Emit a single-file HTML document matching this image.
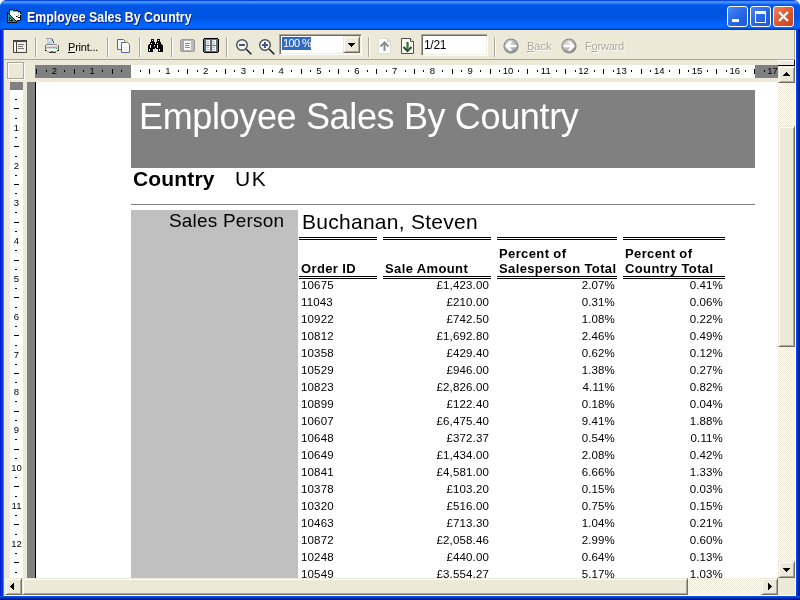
<!DOCTYPE html>
<html><head><meta charset="utf-8">
<style>
*{margin:0;padding:0;box-sizing:border-box}
html,body{width:800px;height:600px;overflow:hidden;background:#fff;font-family:"Liberation Sans",sans-serif}
.a{position:absolute}
#title{left:0;top:0;width:800px;height:30px;border-radius:6px 6px 0 0;
 background:linear-gradient(to bottom,#0a45dc 0px,#0a45dc 1px,#3d90ff 1px,#3d90ff 3px,#2a7af8 3px,#2a7af8 4px,#0f62ee 4px,#0f62ee 5px,#0058e8 5px,#0054e2 10px,#0054e2 18px,#005cf0 21px,#0066ff 25px,#0066ff 28px,#0050e0 28px,#0050e0 29px,#0038c8 29px)}
#ttext{left:27px;top:9px;color:#fff;font-weight:bold;font-size:14px;line-height:17px;text-shadow:1px 1px 0 #0a1e80;transform:scaleX(0.885);transform-origin:0 0;white-space:nowrap}
#frameL{left:0;top:30px;width:4px;height:570px;background:linear-gradient(to right,#0020d0 0,#0020d0 1px,#0830d8 1px,#0838e0 3px,#3a84f6 3px)}
#frameR{left:796px;top:30px;width:4px;height:570px;background:linear-gradient(to right,#0048e8 0,#0048e8 1px,#0036c4 1px,#0030b8 2px,#00209c 3px,#001080 4px)}
#frameB{left:0;top:596px;width:800px;height:4px;background:linear-gradient(to bottom,#0a52e6 0,#0a52e6 1px,#0040d0 1px,#0030b8 2px,#00209c 3px,#001080 4px)}
#client{left:4px;top:30px;width:792px;height:566px;background:#ece9d8}
#tbline{left:4px;top:59px;width:792px;height:1px;background:#aca899}
.sep{top:37px;width:2px;height:20px;border-left:1px solid #aca899;border-right:1px solid #fff}
.tbtext{font-size:11px;line-height:13px;color:#000;white-space:nowrap}
.dis{color:#aca899;text-shadow:1px 1px 0 #fff}
#corner{left:7px;top:62px;width:17px;height:17px;border:1px solid #aca899;box-shadow:inset 1px 1px 0 #fff,1px 1px 0 #fff}
#hrul{left:35px;top:65px;width:743px;height:13px;background:#fff;overflow:hidden}
.hgray{top:0;height:13px;background:#808080}
.hn{position:absolute;top:-1px;width:20px;text-align:center;font-size:9.5px;line-height:13px;color:#000}
.ht{position:absolute;top:4px;width:1px;height:5px;background:#000}
.hd{position:absolute;top:5px;width:1px;height:2px;background:#000}
#vrul{left:10px;top:82px;width:13px;height:496px;background:#fff;overflow:hidden}
.vn{position:absolute;left:0;width:13px;text-align:center;font-size:9.5px;line-height:12px;color:#000}
.vt{position:absolute;left:4px;width:5px;height:1px;background:#000}
.vd{position:absolute;left:5px;width:2px;height:1px;background:#000}
#gstrip{left:27px;top:82px;width:8px;height:496px;background:#808080}
#bline{left:35px;top:82px;width:1px;height:496px;background:#000}
#page{left:36px;top:82px;width:742px;height:496px;background:#fff}
.track{background-color:#fff;background-image:linear-gradient(45deg,#ece9d8 25%,transparent 25%,transparent 75%,#ece9d8 75%),linear-gradient(45deg,#ece9d8 25%,transparent 25%,transparent 75%,#ece9d8 75%);background-size:2px 2px;background-position:0 0,1px 1px}
.b3d{background:#ece9d8;border-top:1px solid #ece9d8;border-left:1px solid #ece9d8;border-right:1px solid #716f64;border-bottom:1px solid #716f64;box-shadow:inset 1px 1px 0 #fff,inset -1px -1px 0 #aca899}
.td{position:absolute;font-size:11.5px;line-height:13px;color:#000;white-space:nowrap;letter-spacing:0.15px}
.r{text-align:right}
.dl{position:absolute;height:3px;border-top:1px solid #000;border-bottom:1px solid #000}
.th{position:absolute;font-weight:bold;font-size:13px;line-height:15px;color:#000;white-space:nowrap;letter-spacing:0.38px}
.tbb{position:absolute;width:21px;height:21px;border:1px solid #fff;border-radius:3px}
#wrap{position:absolute;left:0;top:0;width:800px;height:600px;will-change:transform}
</style></head><body><div id="wrap">
<div class="a" id="title"></div>
<svg class="a" style="left:6px;top:8px" width="16" height="16" viewBox="0 0 16 16" shape-rendering="crispEdges">
 <path d="M3 1 H7 V2 H12 V3 H15 V4 H15 V12 H14 V13 H7 V12 H4 V4 H3 Z" fill="#000"/>
 <path d="M4 3 H7 V4 H12 V5 H14 V12 H7 V11 H4 Z" fill="#fff"/>
 <rect x="4" y="2" width="3" height="1" fill="#10e8e8"/>
 <rect x="7" y="3" width="5" height="1" fill="#10e8e8"/>
 <rect x="12" y="4" width="2" height="1" fill="#10e8e8"/>
 <rect x="12" y="7" width="1" height="1" fill="#e04818"/>
 <rect x="11" y="8" width="1" height="1" fill="#e04818"/>
 <rect x="10" y="8" width="1" height="1" fill="#000"/>
 <rect x="12" y="9" width="2" height="1" fill="#000"/>
 <rect x="14" y="6" width="1" height="1" fill="#c8c8c8"/>
 <path d="M1 4 H2 V5 H3 V6 H4 V7 H5 V8 H6 V9 H7 V10 H8 V11 H9 V12 H10 V13 H11 V15 H1 Z" fill="#000"/>
 <path d="M2 6 H3 V7 H4 V8 H5 V9 H6 V10 H7 V11 H8 V12 H9 V13 H10 V14 H2 Z" fill="#1c9c94"/>
 <path d="M3 9 H4 V10 H5 V11 H6 V12 H7 V13 H3 Z" fill="#000"/>
 <rect x="4" y="11" width="1" height="1" fill="#fff"/>
 <rect x="10" y="12" width="1" height="1" fill="#d0d0d0"/>
</svg>
<div class="a" id="ttext">Employee Sales By Country</div>
<div class="tbb" style="left:727px;top:6px;background:linear-gradient(135deg,#4a88f8 0%,#2a68e8 50%,#1c58d8 100%)"></div>
<div class="a" style="left:732px;top:19px;width:7px;height:3px;background:#fff"></div>
<div class="tbb" style="left:750px;top:6px;background:linear-gradient(135deg,#4a88f8 0%,#2a68e8 50%,#1c58d8 100%)"></div>
<div class="a" style="left:755px;top:11px;width:11px;height:12px;border:1px solid #fff;border-top-width:3px"></div>
<div class="tbb" style="left:773px;top:6px;background:linear-gradient(135deg,#f08060 0%,#e05830 50%,#c84020 100%)"></div>
<svg class="a" style="left:773px;top:6px" width="21" height="21" viewBox="0 0 21 21"><path d="M6 6 L15 15 M15 6 L6 15" stroke="#fff" stroke-width="2.2"/></svg>

<div class="a" id="frameL"></div>
<div class="a" id="frameR"></div>
<div class="a" id="frameB"></div>
<div class="a" id="client"></div>
<div class="a" id="tbline"></div>
<div class="a" style="left:4px;top:30px;width:1px;height:29px;background:#f8f6ee"></div>
<div class="a" style="left:794px;top:30px;width:1px;height:30px;background:#aca899"></div>
<div class="a" style="left:795px;top:30px;width:1px;height:30px;background:#fff"></div>

<!-- toolbar -->
<svg class="a" style="left:13px;top:40px" width="14" height="13" viewBox="0 0 14 13" shape-rendering="crispEdges">
 <rect x="0" y="0" width="14" height="13" fill="#46443c"/>
 <rect x="1" y="2" width="2" height="10" fill="#fff"/>
 <rect x="3" y="2" width="1" height="10" fill="#46443c"/>
 <rect x="4" y="2" width="9" height="10" fill="#f0efea"/>
 <rect x="5" y="4" width="6" height="1" fill="#7c7a70"/>
 <rect x="5" y="6" width="5" height="1" fill="#7c7a70"/>
 <rect x="5" y="8" width="6" height="1" fill="#7c7a70"/>
</svg>
<div class="a sep" style="left:35px"></div>
<svg class="a" style="left:45px;top:38px" width="14" height="16" viewBox="0 0 14 16" shape-rendering="crispEdges">
 <rect x="1" y="0" width="6" height="1" fill="#9c9c9c"/>
 <rect x="2" y="1" width="5" height="5" fill="#b4d0f8"/>
 <rect x="3" y="1" width="3" height="2" fill="#d8e8fc"/>
 <rect x="7" y="1" width="1" height="2" fill="#303c78"/>
 <rect x="8" y="3" width="1" height="2" fill="#303c78"/>
 <path d="M1 6 H12 V7 H13 V12 H0 V7 H1 Z" fill="#d4d4d4"/>
 <rect x="1" y="6" width="11" height="1" fill="#888"/>
 <rect x="1" y="7" width="11" height="1" fill="#f2f2f2"/>
 <rect x="2" y="9" width="10" height="1" fill="#a8a8a8"/>
 <rect x="0" y="7" width="1" height="5" fill="#707070"/>
 <rect x="13" y="7" width="1" height="5" fill="#606060"/>
 <rect x="11" y="10" width="1" height="1" fill="#30c030"/>
 <rect x="1" y="11" width="12" height="2" fill="#f8f8f8"/>
 <rect x="0" y="12" width="2" height="1" fill="#303030"/>
 <rect x="12" y="12" width="2" height="1" fill="#303030"/>
 <rect x="2" y="13" width="10" height="1" fill="#b8b8b8"/>
 <rect x="6" y="13" width="2" height="1" fill="#4070c8"/>
 <rect x="4" y="14" width="7" height="1" fill="#3a3a3a"/>
</svg>
<div class="a tbtext" style="left:68px;top:41px;letter-spacing:-0.2px"><u>P</u>rint...</div>
<div class="a sep" style="left:107px"></div>
<svg class="a" style="left:117px;top:39px" width="14" height="15" viewBox="0 0 14 15">
 <path d="M0.5 0.5 H6.5 L8.5 2.5 V10.5 H0.5 Z" fill="#f4f7fc" stroke="#56689a"/>
 <path d="M4.5 3.5 H10.5 L12.5 5.5 V13.5 H4.5 Z" fill="#f8fafd" stroke="#56689a"/>
 <rect x="6" y="8" width="5" height="1" fill="#e4eaf4"/>
 <rect x="6" y="10" width="4" height="1" fill="#e4eaf4"/>
 <circle cx="9.5" cy="2.5" r="0.9" fill="#e8e020"/>
</svg>
<div class="a sep" style="left:139px"></div>
<svg class="a" style="left:145px;top:37px" width="20" height="16" viewBox="0 0 20 16" shape-rendering="crispEdges" fill="#000">
 <rect x="6" y="2" width="3" height="1"/>
 <rect x="12" y="2" width="3" height="1"/>
 <rect x="6" y="3" width="3" height="1"/>
 <rect x="12" y="3" width="3" height="1"/>
 <rect x="6" y="4" width="3" height="1"/>
 <rect x="12" y="4" width="3" height="1"/>
 <rect x="5" y="5" width="5" height="1"/>
 <rect x="11" y="5" width="5" height="1"/>
 <rect x="5" y="6" width="5" height="1"/>
 <rect x="11" y="6" width="5" height="1"/>
 <rect x="4" y="7" width="13" height="1"/>
 <rect x="3" y="8" width="15" height="1"/>
 <rect x="3" y="9" width="15" height="1"/>
 <rect x="3" y="10" width="15" height="1"/>
 <rect x="3" y="11" width="7" height="1"/>
 <rect x="11" y="11" width="7" height="1"/>
 <rect x="3" y="12" width="5" height="1"/>
 <rect x="13" y="12" width="5" height="1"/>
 <rect x="3" y="13" width="5" height="1"/>
 <rect x="13" y="13" width="5" height="1"/>
 <rect x="3" y="14" width="5" height="1"/>
 <rect x="13" y="14" width="5" height="1"/>
 <rect x="7" y="3" width="1" height="1" fill="#fff"/>
 <rect x="13" y="3" width="1" height="1" fill="#fff"/>
 <rect x="6" y="6" width="1" height="1" fill="#fff"/>
 <rect x="12" y="6" width="1" height="1" fill="#fff"/>
 <rect x="5" y="8" width="1" height="1" fill="#fff"/>
 <rect x="5" y="9" width="1" height="1" fill="#fff"/>
 <rect x="5" y="10" width="1" height="1" fill="#e8e8e8"/>
 <rect x="12" y="8" width="1" height="1" fill="#fff"/>
 <rect x="12" y="9" width="1" height="1" fill="#fff"/>
 <rect x="12" y="10" width="1" height="1" fill="#e8e8e8"/>
 <rect x="9" y="8" width="1" height="1" fill="#a0a0a0"/>
 <rect x="9" y="9" width="1" height="1" fill="#a0a0a0"/>
 <rect x="4" y="12" width="1" height="1" fill="#fff"/>
 <rect x="4" y="13" width="1" height="1" fill="#e0e0e0"/>
 <rect x="14" y="12" width="1" height="1" fill="#fff"/>
 <rect x="14" y="13" width="1" height="1" fill="#e0e0e0"/>
</svg>
<div class="a sep" style="left:171px"></div>
<svg class="a" style="left:180px;top:39px" width="15" height="13" viewBox="0 0 15 13" shape-rendering="crispEdges">
 <path d="M1 0 H14 V1 H15 V12 H14 V13 H1 V12 H0 V1 H1 Z" fill="#9c9c9c"/>
 <rect x="1" y="1" width="13" height="11" fill="#b4b4b4"/>
 <rect x="2" y="1" width="2" height="11" fill="#a8a8a8"/>
 <rect x="11" y="1" width="2" height="11" fill="#bcbcbc"/>
 <rect x="4" y="2" width="7" height="9" fill="#fafafa"/>
 <rect x="5" y="4" width="5" height="1" fill="#8a8a8a"/>
 <rect x="5" y="6" width="4" height="1" fill="#8a8a8a"/>
 <rect x="5" y="8" width="5" height="1" fill="#8a8a8a"/>
</svg>
<svg class="a" style="left:203px;top:38px" width="16" height="15" viewBox="0 0 16 15" shape-rendering="crispEdges">
 <path d="M1 0 H15 V1 H16 V14 H15 V15 H1 V14 H0 V1 H1 Z" fill="#000"/>
 <rect x="1" y="1" width="14" height="13" fill="#6c6c6c"/>
 <rect x="3" y="2" width="4" height="5" fill="#fff"/>
 <rect x="9" y="2" width="4" height="5" fill="#fff"/>
 <rect x="3" y="8" width="4" height="5" fill="#fff"/>
 <rect x="9" y="8" width="4" height="5" fill="#fff"/>
 <rect x="3" y="2" width="1" height="5" fill="#c8e4f8"/>
 <rect x="9" y="2" width="1" height="5" fill="#c8e4f8"/>
 <rect x="3" y="8" width="1" height="5" fill="#c8e4f8"/>
 <rect x="9" y="8" width="1" height="5" fill="#c8e4f8"/>
 <rect x="4" y="3" width="2" height="1" fill="#b0b0b0"/>
 <rect x="4" y="5" width="2" height="1" fill="#b0b0b0"/>
 <rect x="10" y="3" width="2" height="1" fill="#b0b0b0"/>
 <rect x="10" y="5" width="2" height="1" fill="#b0b0b0"/>
 <rect x="4" y="9" width="2" height="1" fill="#b0b0b0"/>
 <rect x="4" y="11" width="2" height="1" fill="#b0b0b0"/>
 <rect x="10" y="9" width="2" height="1" fill="#b0b0b0"/>
 <rect x="10" y="11" width="2" height="1" fill="#b0b0b0"/>
</svg>
<div class="a sep" style="left:226px"></div>
<svg class="a" style="left:236px;top:39px" width="17" height="17" viewBox="0 0 17 17">
 <path d="M10.5 10.5 L15.5 15.5" stroke="#c8ccd4" stroke-width="2.2"/>
 <path d="M10 10 L15.3 15.3" stroke="#1a1a1a" stroke-width="1.3"/>
 <circle cx="6" cy="6" r="5.3" fill="#f2f5fa" stroke="#4c4c4c" stroke-width="1.4"/>
 <rect x="3" y="5" width="6" height="2" fill="#46568c"/>
 
</svg>
<svg class="a" style="left:259px;top:39px" width="17" height="17" viewBox="0 0 17 17">
 <path d="M10.5 10.5 L15.5 15.5" stroke="#c8ccd4" stroke-width="2.2"/>
 <path d="M10 10 L15.3 15.3" stroke="#1a1a1a" stroke-width="1.3"/>
 <circle cx="6" cy="6" r="5.3" fill="#f2f5fa" stroke="#4c4c4c" stroke-width="1.4"/>
 <rect x="3" y="5" width="6" height="2" fill="#46568c"/>
 <rect x="5" y="3" width="2" height="6" fill="#46568c"/>
</svg>
<!-- combo -->
<div class="a" style="left:279px;top:34px;width:83px;height:21px;background:#fff;border-top:1px solid #aca899;border-left:1px solid #aca899;border-right:1px solid #fff;border-bottom:1px solid #fff;box-shadow:inset 1px 1px 0 #716f64,inset -1px -1px 0 #f1efe2"></div>
<div class="a" style="left:282px;top:37px;width:29px;height:13px;background:#316ac5"></div>
<div class="a tbtext" style="left:283px;top:37px;color:#fff;letter-spacing:-0.6px">100 %</div>
<div class="a b3d" style="left:343px;top:36px;width:17px;height:17px"></div>
<svg class="a" style="left:348px;top:43px" width="7" height="4" viewBox="0 0 7 4" shape-rendering="crispEdges"><path d="M0 0 H7 V1 H6 V2 H5 V3 H4 V4 H3 V3 H2 V2 H1 V1 H0 Z" fill="#000"/></svg>
<div class="a sep" style="left:368px"></div>
<svg class="a" style="left:378px;top:38px" width="13" height="16" viewBox="0 0 13 16">
 <path d="M0.5 0.5 L9.5 0.5 L12.5 3.5 L12.5 15.5 L0.5 15.5 Z" fill="#fdfdfb" stroke="#dcdcd8"/>
 <path d="M9.5 0.5 L9.5 3.5 L12.5 3.5" fill="#e8e8e4" stroke="#c8c8c4"/>
 <path d="M6.5 4.5 L6.5 13" stroke="#8c8c8c" stroke-width="2"/>
 <path d="M2.5 8.5 L6.5 4.5 L10.5 8.5" stroke="#8c8c8c" stroke-width="2" fill="none"/>
</svg>
<svg class="a" style="left:401px;top:38px" width="13" height="16" viewBox="0 0 13 16">
 <path d="M0.5 0.5 L9.5 0.5 L12.5 3.5 L12.5 15.5 L0.5 15.5 Z" fill="#fbfbf6" stroke="#505048"/>
 <path d="M9.5 0.5 L9.5 3.5 L12.5 3.5" fill="#fff" stroke="#505048"/>
 <path d="M6.5 4 L6.5 13" stroke="#2a4a2a" stroke-width="2"/>
 <path d="M2.5 9 L6.5 13 L10.5 9" stroke="#2a4a2a" stroke-width="2" fill="none"/>
 <path d="M7 5 L7 12" stroke="#40b040" stroke-width="1"/>
</svg>
<div class="a" style="left:421px;top:34px;width:67px;height:22px;background:#fff;border-top:1px solid #aca899;border-left:1px solid #aca899;border-right:1px solid #fff;border-bottom:1px solid #fff;box-shadow:inset 1px 1px 0 #716f64,inset -1px -1px 0 #f1efe2"></div>
<div class="a tbtext" style="left:424px;top:39px;font-size:12px;letter-spacing:-0.3px">1/21</div>
<div class="a sep" style="left:494px"></div>
<svg class="a" style="left:503px;top:38px" width="16" height="16" viewBox="0 0 16 16">
 <defs><radialGradient id="gb" cx="0.4" cy="0.35" r="0.7"><stop offset="0" stop-color="#e4e4e4"/><stop offset="0.6" stop-color="#b4b4b4"/><stop offset="1" stop-color="#8c8c8c"/></radialGradient></defs>
 <circle cx="8" cy="8" r="7.6" fill="#8a8a8a"/>
 <circle cx="8" cy="8" r="6.6" fill="url(#gb)"/>
 <path d="M3.5 8 L7.5 4 M3.5 8 L7.5 12 M3.8 8 L12.5 8" stroke="#fff" stroke-width="2.4" stroke-linecap="round"/>
</svg>
<div class="a tbtext dis" style="left:527px;top:40px"><u>B</u>ack</div>
<svg class="a" style="left:561px;top:38px" width="16" height="16" viewBox="0 0 16 16">
 <circle cx="8" cy="8" r="7.6" fill="#8a8a8a"/>
 <circle cx="8" cy="8" r="6.6" fill="url(#gb)"/>
 <path d="M12.5 8 L8.5 4 M12.5 8 L8.5 12 M12.2 8 L3.5 8" stroke="#fff" stroke-width="2.4" stroke-linecap="round"/>
</svg>
<div class="a tbtext dis" style="left:585px;top:40px;letter-spacing:-0.2px">F<u>o</u>rward</div>

<div class="a" id="corner"></div>
<div class="a" id="hrul">
<div class="a hgray" style="left:0;width:96px"></div>
<div class="a hgray" style="left:720px;width:23px"></div>
<div class="ht" style="left:1.0px"></div>
<div class="hd" style="left:10.5px"></div>
<div class="hn" style="left:9.4px">2</div>
<div class="hd" style="left:29.4px"></div>
<div class="ht" style="left:38.8px"></div>
<div class="hd" style="left:48.2px"></div>
<div class="hn" style="left:47.2px">1</div>
<div class="hd" style="left:67.2px"></div>
<div class="ht" style="left:76.6px"></div>
<div class="hd" style="left:86.0px"></div>
<div class="hd" style="left:104.9px"></div>
<div class="ht" style="left:114.4px"></div>
<div class="hd" style="left:123.8px"></div>
<div class="hn" style="left:122.8px">1</div>
<div class="hd" style="left:142.8px"></div>
<div class="ht" style="left:152.2px"></div>
<div class="hd" style="left:161.6px"></div>
<div class="hn" style="left:160.6px">2</div>
<div class="hd" style="left:180.6px"></div>
<div class="ht" style="left:190.0px"></div>
<div class="hd" style="left:199.4px"></div>
<div class="hn" style="left:198.4px">3</div>
<div class="hd" style="left:218.3px"></div>
<div class="ht" style="left:227.8px"></div>
<div class="hd" style="left:237.2px"></div>
<div class="hn" style="left:236.2px">4</div>
<div class="hd" style="left:256.1px"></div>
<div class="ht" style="left:265.6px"></div>
<div class="hd" style="left:275.0px"></div>
<div class="hn" style="left:274.0px">5</div>
<div class="hd" style="left:293.9px"></div>
<div class="ht" style="left:303.4px"></div>
<div class="hd" style="left:312.9px"></div>
<div class="hn" style="left:311.8px">6</div>
<div class="hd" style="left:331.8px"></div>
<div class="ht" style="left:341.2px"></div>
<div class="hd" style="left:350.6px"></div>
<div class="hn" style="left:349.6px">7</div>
<div class="hd" style="left:369.5px"></div>
<div class="ht" style="left:379.0px"></div>
<div class="hd" style="left:388.4px"></div>
<div class="hn" style="left:387.4px">8</div>
<div class="hd" style="left:407.3px"></div>
<div class="ht" style="left:416.8px"></div>
<div class="hd" style="left:426.2px"></div>
<div class="hn" style="left:425.2px">9</div>
<div class="hd" style="left:445.1px"></div>
<div class="ht" style="left:454.6px"></div>
<div class="hd" style="left:464.0px"></div>
<div class="hn" style="left:463.0px">10</div>
<div class="hd" style="left:483.0px"></div>
<div class="ht" style="left:492.4px"></div>
<div class="hd" style="left:501.8px"></div>
<div class="hn" style="left:500.8px">11</div>
<div class="hd" style="left:520.8px"></div>
<div class="ht" style="left:530.2px"></div>
<div class="hd" style="left:539.6px"></div>
<div class="hn" style="left:538.6px">12</div>
<div class="hd" style="left:558.5px"></div>
<div class="ht" style="left:568.0px"></div>
<div class="hd" style="left:577.5px"></div>
<div class="hn" style="left:576.4px">13</div>
<div class="hd" style="left:596.3px"></div>
<div class="ht" style="left:605.8px"></div>
<div class="hd" style="left:615.2px"></div>
<div class="hn" style="left:614.2px">14</div>
<div class="hd" style="left:634.1px"></div>
<div class="ht" style="left:643.6px"></div>
<div class="hd" style="left:653.0px"></div>
<div class="hn" style="left:652.0px">15</div>
<div class="hd" style="left:671.9px"></div>
<div class="ht" style="left:681.4px"></div>
<div class="hd" style="left:690.8px"></div>
<div class="hn" style="left:689.8px">16</div>
<div class="hd" style="left:709.8px"></div>
<div class="ht" style="left:719.2px"></div>
<div class="hd" style="left:728.6px"></div>
<div class="hn" style="left:727.6px">17</div>
</div>
<div class="a" id="vrul">
<div class="a" style="left:0;top:0;width:13px;height:8px;background:#808080"></div>
<div class="vd" style="top:17.0px"></div>
<div class="vt" style="top:26.4px"></div>
<div class="vd" style="top:35.8px"></div>
<div class="vn" style="top:39.8px">1</div>
<div class="vd" style="top:54.8px"></div>
<div class="vt" style="top:64.2px"></div>
<div class="vd" style="top:73.6px"></div>
<div class="vn" style="top:77.6px">2</div>
<div class="vd" style="top:92.6px"></div>
<div class="vt" style="top:102.0px"></div>
<div class="vd" style="top:111.4px"></div>
<div class="vn" style="top:115.4px">3</div>
<div class="vd" style="top:130.3px"></div>
<div class="vt" style="top:139.8px"></div>
<div class="vd" style="top:149.2px"></div>
<div class="vn" style="top:153.2px">4</div>
<div class="vd" style="top:168.1px"></div>
<div class="vt" style="top:177.6px"></div>
<div class="vd" style="top:187.0px"></div>
<div class="vn" style="top:191.0px">5</div>
<div class="vd" style="top:205.9px"></div>
<div class="vt" style="top:215.4px"></div>
<div class="vd" style="top:224.9px"></div>
<div class="vn" style="top:228.8px">6</div>
<div class="vd" style="top:243.8px"></div>
<div class="vt" style="top:253.2px"></div>
<div class="vd" style="top:262.6px"></div>
<div class="vn" style="top:266.6px">7</div>
<div class="vd" style="top:281.5px"></div>
<div class="vt" style="top:291.0px"></div>
<div class="vd" style="top:300.4px"></div>
<div class="vn" style="top:304.4px">8</div>
<div class="vd" style="top:319.3px"></div>
<div class="vt" style="top:328.8px"></div>
<div class="vd" style="top:338.2px"></div>
<div class="vn" style="top:342.2px">9</div>
<div class="vd" style="top:357.1px"></div>
<div class="vt" style="top:366.6px"></div>
<div class="vd" style="top:376.0px"></div>
<div class="vn" style="top:380.0px">10</div>
<div class="vd" style="top:394.9px"></div>
<div class="vt" style="top:404.4px"></div>
<div class="vd" style="top:413.8px"></div>
<div class="vn" style="top:417.8px">11</div>
<div class="vd" style="top:432.8px"></div>
<div class="vt" style="top:442.2px"></div>
<div class="vd" style="top:451.6px"></div>
<div class="vn" style="top:455.6px">12</div>
<div class="vd" style="top:470.5px"></div>
<div class="vt" style="top:480.0px"></div>
<div class="vd" style="top:489.5px"></div>
</div>
<div class="a" id="gstrip"></div>
<div class="a" id="bline"></div>
<div class="a" id="page"></div>

<!-- report -->
<div class="a" style="left:131px;top:90px;width:624px;height:78px;background:#808080"></div>
<div class="a" style="left:139px;top:95px;font-size:36px;line-height:44px;color:#fff;white-space:nowrap;letter-spacing:-0.35px">Employee Sales By Country</div>
<div class="a" style="left:133px;top:167px;font-size:21px;line-height:24px;font-weight:bold;color:#000;letter-spacing:0.15px">Country</div>
<div class="a" style="left:235px;top:167px;font-size:21px;line-height:24px;color:#000;letter-spacing:1.5px">UK</div>
<div class="a" style="left:131px;top:204px;width:624px;height:1px;background:#808080"></div>
<div class="a" style="left:131px;top:210px;width:167px;height:368px;background:#c0c0c0"></div>
<div class="a" style="left:169px;top:210px;font-size:19px;line-height:22px;color:#000;white-space:nowrap;letter-spacing:0.18px">Sales Person</div>
<div class="a" style="left:302px;top:210px;font-size:21px;line-height:24px;color:#000;white-space:nowrap;letter-spacing:0.27px">Buchanan, Steven</div>

<div class="dl" style="left:299px;top:237px;width:78px"></div>
<div class="dl" style="left:383px;top:237px;width:108px"></div>
<div class="dl" style="left:497px;top:237px;width:120px"></div>
<div class="dl" style="left:623px;top:237px;width:102px"></div>
<div class="dl" style="left:299px;top:276px;width:78px"></div>
<div class="dl" style="left:383px;top:276px;width:108px"></div>
<div class="dl" style="left:497px;top:276px;width:120px"></div>
<div class="dl" style="left:623px;top:276px;width:102px"></div>
<div class="th" style="left:301px;top:261px">Order ID</div>
<div class="th" style="left:385px;top:261px">Sale Amount</div>
<div class="th" style="left:499px;top:246px">Percent of<br>Salesperson Total</div>
<div class="th" style="left:625px;top:246px">Percent of<br>Country Total</div>
<div class="td" style="top:279px;left:301px">10675</div>
<div class="td r" style="top:279px;left:383px;width:106px">£1,423.00</div>
<div class="td r" style="top:279px;left:497px;width:118px">2.07%</div>
<div class="td r" style="top:279px;left:623px;width:100px">0.41%</div>
<div class="td" style="top:296px;left:301px">11043</div>
<div class="td r" style="top:296px;left:383px;width:106px">£210.00</div>
<div class="td r" style="top:296px;left:497px;width:118px">0.31%</div>
<div class="td r" style="top:296px;left:623px;width:100px">0.06%</div>
<div class="td" style="top:313px;left:301px">10922</div>
<div class="td r" style="top:313px;left:383px;width:106px">£742.50</div>
<div class="td r" style="top:313px;left:497px;width:118px">1.08%</div>
<div class="td r" style="top:313px;left:623px;width:100px">0.22%</div>
<div class="td" style="top:330px;left:301px">10812</div>
<div class="td r" style="top:330px;left:383px;width:106px">£1,692.80</div>
<div class="td r" style="top:330px;left:497px;width:118px">2.46%</div>
<div class="td r" style="top:330px;left:623px;width:100px">0.49%</div>
<div class="td" style="top:347px;left:301px">10358</div>
<div class="td r" style="top:347px;left:383px;width:106px">£429.40</div>
<div class="td r" style="top:347px;left:497px;width:118px">0.62%</div>
<div class="td r" style="top:347px;left:623px;width:100px">0.12%</div>
<div class="td" style="top:364px;left:301px">10529</div>
<div class="td r" style="top:364px;left:383px;width:106px">£946.00</div>
<div class="td r" style="top:364px;left:497px;width:118px">1.38%</div>
<div class="td r" style="top:364px;left:623px;width:100px">0.27%</div>
<div class="td" style="top:381px;left:301px">10823</div>
<div class="td r" style="top:381px;left:383px;width:106px">£2,826.00</div>
<div class="td r" style="top:381px;left:497px;width:118px">4.11%</div>
<div class="td r" style="top:381px;left:623px;width:100px">0.82%</div>
<div class="td" style="top:398px;left:301px">10899</div>
<div class="td r" style="top:398px;left:383px;width:106px">£122.40</div>
<div class="td r" style="top:398px;left:497px;width:118px">0.18%</div>
<div class="td r" style="top:398px;left:623px;width:100px">0.04%</div>
<div class="td" style="top:415px;left:301px">10607</div>
<div class="td r" style="top:415px;left:383px;width:106px">£6,475.40</div>
<div class="td r" style="top:415px;left:497px;width:118px">9.41%</div>
<div class="td r" style="top:415px;left:623px;width:100px">1.88%</div>
<div class="td" style="top:432px;left:301px">10648</div>
<div class="td r" style="top:432px;left:383px;width:106px">£372.37</div>
<div class="td r" style="top:432px;left:497px;width:118px">0.54%</div>
<div class="td r" style="top:432px;left:623px;width:100px">0.11%</div>
<div class="td" style="top:449px;left:301px">10649</div>
<div class="td r" style="top:449px;left:383px;width:106px">£1,434.00</div>
<div class="td r" style="top:449px;left:497px;width:118px">2.08%</div>
<div class="td r" style="top:449px;left:623px;width:100px">0.42%</div>
<div class="td" style="top:466px;left:301px">10841</div>
<div class="td r" style="top:466px;left:383px;width:106px">£4,581.00</div>
<div class="td r" style="top:466px;left:497px;width:118px">6.66%</div>
<div class="td r" style="top:466px;left:623px;width:100px">1.33%</div>
<div class="td" style="top:483px;left:301px">10378</div>
<div class="td r" style="top:483px;left:383px;width:106px">£103.20</div>
<div class="td r" style="top:483px;left:497px;width:118px">0.15%</div>
<div class="td r" style="top:483px;left:623px;width:100px">0.03%</div>
<div class="td" style="top:500px;left:301px">10320</div>
<div class="td r" style="top:500px;left:383px;width:106px">£516.00</div>
<div class="td r" style="top:500px;left:497px;width:118px">0.75%</div>
<div class="td r" style="top:500px;left:623px;width:100px">0.15%</div>
<div class="td" style="top:517px;left:301px">10463</div>
<div class="td r" style="top:517px;left:383px;width:106px">£713.30</div>
<div class="td r" style="top:517px;left:497px;width:118px">1.04%</div>
<div class="td r" style="top:517px;left:623px;width:100px">0.21%</div>
<div class="td" style="top:534px;left:301px">10872</div>
<div class="td r" style="top:534px;left:383px;width:106px">£2,058.46</div>
<div class="td r" style="top:534px;left:497px;width:118px">2.99%</div>
<div class="td r" style="top:534px;left:623px;width:100px">0.60%</div>
<div class="td" style="top:551px;left:301px">10248</div>
<div class="td r" style="top:551px;left:383px;width:106px">£440.00</div>
<div class="td r" style="top:551px;left:497px;width:118px">0.64%</div>
<div class="td r" style="top:551px;left:623px;width:100px">0.13%</div>
<div class="td" style="top:568px;left:301px">10549</div>
<div class="td r" style="top:568px;left:383px;width:106px">£3,554.27</div>
<div class="td r" style="top:568px;left:497px;width:118px">5.17%</div>
<div class="td r" style="top:568px;left:623px;width:100px">1.03%</div>

<!-- scrollbars -->
<div class="a track" style="left:778px;top:61px;width:17px;height:517px"></div>
<div class="a" style="left:778px;top:60px;width:17px;height:6px;background:#ece9d8;border-right:1px solid #000;border-bottom:1px solid #000;box-shadow:inset 1px 1px 0 #fff"></div>
<div class="a b3d" style="left:778px;top:66px;width:17px;height:17px"></div>
<svg class="a" style="left:783px;top:72px" width="7" height="4" viewBox="0 0 7 4" shape-rendering="crispEdges"><path d="M3 0 H4 V1 H5 V2 H6 V3 H7 V4 H0 V3 H1 V2 H2 V1 H3 Z" fill="#000"/></svg>
<div class="a b3d" style="left:778px;top:126px;width:17px;height:221px"></div>
<div class="a b3d" style="left:778px;top:561px;width:17px;height:17px"></div>
<svg class="a" style="left:783px;top:568px" width="7" height="4" viewBox="0 0 7 4" shape-rendering="crispEdges"><path d="M0 0 H7 V1 H6 V2 H5 V3 H4 V4 H3 V3 H2 V2 H1 V1 H0 Z" fill="#000"/></svg>
<div class="a track" style="left:5px;top:578px;width:773px;height:17px"></div>
<div class="a b3d" style="left:5px;top:578px;width:17px;height:17px"></div>
<svg class="a" style="left:10px;top:583px" width="4" height="7" viewBox="0 0 4 7" shape-rendering="crispEdges"><path d="M3 0 H4 V7 H3 V6 H2 V5 H1 V4 H0 V3 H1 V2 H2 V1 H3 Z" fill="#000"/></svg>
<div class="a b3d" style="left:22px;top:578px;width:666px;height:17px"></div>
<div class="a b3d" style="left:761px;top:578px;width:17px;height:17px"></div>
<svg class="a" style="left:768px;top:583px" width="4" height="7" viewBox="0 0 4 7" shape-rendering="crispEdges"><path d="M0 0 H1 V1 H2 V2 H3 V3 H4 V4 H3 V5 H2 V6 H1 V7 H0 Z" fill="#000"/></svg>
<div class="a" style="left:778px;top:578px;width:17px;height:17px;background:#ece9d8"></div>
<div class="a" style="left:4px;top:595px;width:792px;height:1px;background:#fff"></div>
<div class="a" style="left:795px;top:60px;width:1px;height:536px;background:#fff"></div>
</div></body></html>
